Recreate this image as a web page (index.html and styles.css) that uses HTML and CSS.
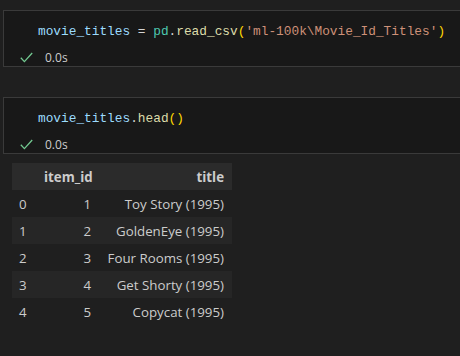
FILE: index.html
```html
<!DOCTYPE html>
<html>
<head>
<meta charset="utf-8">
<link rel="stylesheet" href="styles.css">
</head>
<body>
<div class="cell first">
  <div class="code"><span class="var">movie_titles</span> <span class="op">=</span> <span class="mod">pd</span><span class="op">.</span><span class="fn">read_csv</span><span class="br">(</span><span class="str">'ml-100k\Movie_Id_Titles'</span><span class="br">)</span></div>
  <div class="status">
    <svg class="check" width="13" height="11" viewBox="0 0 13 11"><path d="M0.8 5.8 L4.4 9.6 L12.2 1" fill="none" stroke="#73c991" stroke-width="1.3"/></svg>
    <span class="time">0.0s</span>
  </div>
</div>
<div class="cell second">
  <div class="code"><span class="var">movie_titles</span><span class="op">.</span><span class="fn">head</span><span class="br">()</span></div>
  <div class="status">
    <svg class="check" width="13" height="11" viewBox="0 0 13 11"><path d="M0.8 5.8 L4.4 9.6 L12.2 1" fill="none" stroke="#73c991" stroke-width="1.3"/></svg>
    <span class="time">0.0s</span>
  </div>
</div>
<table class="df">
  <thead>
    <tr><th class="c-idx"></th><th class="c-id">item_id</th><th class="c-title">title</th></tr>
  </thead>
  <tbody>
    <tr><td class="c-idx">0</td><td class="c-id">1</td><td class="c-title">Toy Story (1995)</td></tr>
    <tr><td class="c-idx">1</td><td class="c-id">2</td><td class="c-title">GoldenEye (1995)</td></tr>
    <tr><td class="c-idx">2</td><td class="c-id">3</td><td class="c-title">Four Rooms (1995)</td></tr>
    <tr><td class="c-idx">3</td><td class="c-id">4</td><td class="c-title">Get Shorty (1995)</td></tr>
    <tr><td class="c-idx">4</td><td class="c-id">5</td><td class="c-title">Copycat (1995)</td></tr>
  </tbody>
</table>
</body>
</html>
```
FILE: styles.css
```css
html, body {
  margin: 0;
  padding: 0;
  background: #1f1f1f;
  overflow: hidden;
}
body {
  font-family: "Open Sans", "Noto Sans", sans-serif;
  color: #cccccc;
}
.cell {
  margin-left: 3px;
  margin-right: -20px;
  border: 1px solid #3a3a3a;
  border-right: none;
  background: #181818;
  height: 55px;
  box-sizing: content-box;
}
.first { margin-top: 10px; }
.second { margin-top: 30px; }
.code {
  font-family: "Liberation Mono", "DejaVu Sans Mono", monospace;
  font-size: 12.8px;
  line-height: 20px;
  padding-top: 11px;
  padding-left: 34px;
  white-space: pre;
  color: #d4d4d4;
}
.var { color: #9cdcfe; }
.op { color: #d4d4d4; }
.mod { color: #4ec9b0; }
.fn { color: #dcdcaa; }
.br { color: #ffd700; }
.str { color: #ce9178; }
.status {
  display: flex;
  align-items: center;
  height: 16px;
  margin-top: 7px;
  padding-left: 16px;
}
.check { display: block; }
.time {
  margin-left: 12px;
  font-size: 12px;
  color: #cccccc;
}
.df {
  margin-top: 9px;
  margin-left: 12px;
  border-collapse: collapse;
  font-size: 13.3px;
  table-layout: fixed;
  width: 220px;
}
.df th, .df td {
  height: 27px;
  padding: 0 8px;
  box-sizing: border-box;
  white-space: nowrap;
  text-align: right;
}
.df th { font-weight: 700; }
.df thead tr { background: #2b2b2b; }
.df tbody tr:nth-child(even) { background: #262626; }
.df .c-idx { width: 24px; text-align: left; padding-left: 7px; padding-right: 0; }
.df .c-id { width: 63px; }
.df .c-title { width: 133px; }
```
